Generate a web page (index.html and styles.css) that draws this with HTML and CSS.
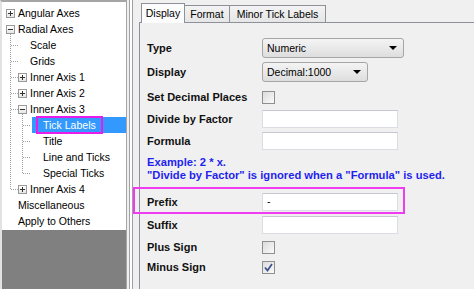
FILE: index.html
```html
<!DOCTYPE html>
<html lang="en">
<head>
    <meta charset="UTF-8">
    <title>Tick Labels - Display</title>
    <link rel="stylesheet" href="styles.css">
</head>
<body>
    <div class="window">
        <!-- Left: tree of axis settings -->
        <div class="tree-pane">
            <svg class="tree-lines" width="127" height="240" viewBox="0 0 127 240">
                <g stroke="#a0a0a0" stroke-width="1" stroke-dasharray="1 1" fill="none">
                    <line x1="10.5" y1="34" x2="10.5" y2="189"/>
                    <line x1="11" y1="45.5" x2="19" y2="45.5"/>
                    <line x1="11" y1="61.5" x2="19" y2="61.5"/>
                    <line x1="11" y1="77.5" x2="18" y2="77.5"/>
                    <line x1="11" y1="93.5" x2="18" y2="93.5"/>
                    <line x1="11" y1="109.5" x2="18" y2="109.5"/>
                    <line x1="11" y1="189.5" x2="18" y2="189.5"/>
                    <line x1="22.5" y1="114" x2="22.5" y2="173"/>
                    <line x1="23" y1="141.5" x2="31" y2="141.5"/>
                    <line x1="23" y1="157.5" x2="31" y2="157.5"/>
                    <line x1="23" y1="173.5" x2="31" y2="173.5"/>
                    <line x1="23" y1="125.5" x2="31" y2="125.5"/>
                </g>
            </svg>
            <ul class="tree">
                <li class="node lv0"><span class="exp plus"></span>Angular Axes</li>
                <li class="node lv0"><span class="exp"></span>Radial Axes</li>
                <li class="node lv1 leaf">Scale</li>
                <li class="node lv1 leaf">Grids</li>
                <li class="node lv1"><span class="exp plus"></span>Inner Axis 1</li>
                <li class="node lv1"><span class="exp plus"></span>Inner Axis 2</li>
                <li class="node lv1"><span class="exp"></span>Inner Axis 3</li>
                <li class="node lv2 selected"><span class="mark">Tick Labels</span></li>
                <li class="node lv2">Title</li>
                <li class="node lv2">Line and Ticks</li>
                <li class="node lv2">Special Ticks</li>
                <li class="node lv1"><span class="exp plus"></span>Inner Axis 4</li>
                <li class="node lv0 leaf">Miscellaneous</li>
                <li class="node lv0 leaf">Apply to Others</li>
            </ul>
            <div class="tree-empty"></div>
        </div>

        <div class="splitter"><div class="grip"></div></div>

        <!-- Right: tabbed settings -->
        <div class="dialog">
            <div class="tabs">
                <div class="tab active">Display</div>
                <div class="tab tab-format">Format</div>
                <div class="tab tab-minor">Minor Tick Labels</div>
            </div>
            <div class="page">
                <div class="form">
                    <div class="label">Type</div>
                    <div class="cell"><div class="combo combo-type"><span>Numeric</span><i class="arrow"></i></div></div>

                    <div class="label">Display</div>
                    <div class="cell"><div class="combo combo-display"><span>Decimal:1000</span><i class="arrow"></i></div></div>

                    <div class="label">Set Decimal Places</div>
                    <div class="cell"><div class="check"></div></div>

                    <div class="label">Divide by Factor</div>
                    <div class="cell"><div class="textbox"></div></div>

                    <div class="label">Formula</div>
                    <div class="cell"><div class="textbox"></div></div>

                    <div class="hint">Example: 2 * x.<br>"Divide by Factor" is ignored when a "Formula" is used.</div>

                    <div class="label prefix-label">Prefix</div>
                    <div class="cell"><div class="textbox">-</div></div>

                    <div class="label">Suffix</div>
                    <div class="cell"><div class="textbox"></div></div>

                    <div class="label">Plus Sign</div>
                    <div class="cell"><div class="check"></div></div>

                    <div class="label">Minus Sign</div>
                    <div class="cell">
                        <div class="check checked">
                            <svg width="11" height="11" viewBox="0 0 11 11"><path d="M2 5.5 L4.5 8.5 L9 2" stroke="#3b4f8c" stroke-width="1.7" fill="none"/></svg>
                        </div>
                    </div>
                </div>
            </div>
        </div>
    </div>
</body>
</html>
```

FILE: styles.css
```css
html, body {
    margin: 0;
    padding: 0;
    background-color: #f0f0f0;
    font-family: 'Liberation Sans', Arial, sans-serif;
    color: #000;
}
.window {
    display: flex;
    width: 474px;
    height: 289px;
    overflow: hidden;
}

/* tree pane */
.tree-pane {
    position: relative;
    width: 127px;
    height: 289px;
    box-sizing: border-box;
    border-top: 2px solid #a5a5a5;
    border-left: 2px solid #e2e2e2;
    border-right: 1px solid #a5a5a5;
    display: flex;
    flex-direction: column;
    background: #fff;
}
.tree-lines {
    position: absolute;
    top: -2px;
    left: -2px;
    pointer-events: none;
}
.tree {
    list-style: none;
    margin: 0;
    padding: 3px 0 0 0;
}
.node {
    display: flex;
    align-items: center;
    height: 16px;
    font-size: 10.5px;
    white-space: nowrap;
}
.node.lv0 { padding-left: 4px; }
.node.lv0.leaf { padding-left: 16px; }
.node.lv1 { padding-left: 16px; }
.node.lv1.leaf { padding-left: 28px; }
.node.lv2 { padding-left: 41px; }
.node.selected {
    margin-left: 30px;
    padding-left: 11px;
    background-color: #3399ff;
    color: #fff;
}
.mark {
    position: relative;
}
.mark::after {
    content: "";
    position: absolute;
    left: -7px;
    right: -7px;
    top: -3px;
    bottom: -3px;
    border: 2px solid #e81de8;
}
.exp {
    position: relative;
    width: 9px;
    height: 9px;
    box-sizing: border-box;
    margin-right: 3px;
    border: 1px solid #9a9a9a;
    background: linear-gradient(#ffffff, #e6e6e6);
}
.exp::before {
    content: "";
    position: absolute;
    left: 1px;
    top: 3px;
    width: 5px;
    height: 1px;
    background: #333;
}
.exp.plus::after {
    content: "";
    position: absolute;
    left: 3px;
    top: 1px;
    width: 1px;
    height: 5px;
    background: #333;
}
.tree-empty {
    flex: 1;
    background-color: #808080;
    margin-top: 1px;
}

/* splitter */
.splitter {
    width: 12px;
    padding-left: 2px;
    box-sizing: border-box;
}
.grip {
    width: 2px;
    height: 100%;
    background: #fff;
    border-left: 1px solid #a0a0a0;
    border-right: 1px solid #a0a0a0;
}

/* tabs */
.dialog {
    flex: 1;
    display: flex;
    flex-direction: column;
}
.tabs {
    display: flex;
    align-items: flex-end;
    height: 22px;
    padding-left: 2px;
}
.tab {
    position: relative;
    height: 17px;
    box-sizing: border-box;
    width: 44px;
    border: 1px solid #8e9199;
    border-bottom: none;
    margin-right: -1px;
    background: linear-gradient(#f3f3f3, #e6e6e6);
    font-size: 10.5px;
    line-height: 16px;
    text-align: center;
}
.tab.active {
    height: 20px;
    line-height: 18px;
    margin-bottom: -1px;
    background: #fcfcfc;
    z-index: 1;
}
.tab-format { width: 46px; }
.tab-minor { width: 97px; }
.page {
    flex: 1;
    border-left: 1px solid #8e9199;
    border-top: 1px solid #8e9199;
    background-color: #f0f0f0;
    padding: 13px 0 0 7px;
}

/* form grid */
.form {
    display: grid;
    grid-template-columns: 115px 1fr;
    grid-template-rows: 24px 24px 26px 18px 26px 36px 24px 22px 22px 18px;
}
.label {
    display: flex;
    align-items: center;
    font-size: 11px;
    font-weight: bold;
    color: #111;
    white-space: nowrap;
}
.cell {
    display: flex;
    align-items: center;
}
.prefix-label {
    position: relative;
}
.prefix-label::before {
    content: "";
    position: absolute;
    left: -14px;
    top: -3px;
    width: 272px;
    height: 27px;
    box-sizing: border-box;
    border: 2px solid #f03cf0;
}
.combo {
    display: flex;
    justify-content: space-between;
    align-items: center;
    height: 20px;
    box-sizing: border-box;
    padding: 0 6px 0 4px;
    border: 1px solid #a6a6a6;
    border-radius: 3px;
    background: linear-gradient(#f4f4f4, #dedede);
    font-size: 10.5px;
}
.combo-type { width: 142px; }
.combo-display { width: 106px; }
.arrow {
    width: 0;
    height: 0;
    border-left: 4px solid transparent;
    border-right: 4px solid transparent;
    border-top: 4px solid #000;
}
.textbox {
    width: 136px;
    height: 18px;
    box-sizing: border-box;
    border: 1px solid #dadde2;
    border-top-color: #c5c8ce;
    background: #fff;
    font-size: 10.5px;
    line-height: 15px;
    padding-left: 4px;
}
.check {
    width: 13px;
    height: 13px;
    box-sizing: border-box;
    border: 1px solid #8f8f8f;
    background: linear-gradient(135deg, #dcdcdc, #fafafa);
}
.check svg {
    display: block;
}
.hint {
    grid-column: 1 / 3;
    padding-top: 2px;
    font-size: 11.2px;
    line-height: 13px;
    font-weight: bold;
    color: #1f1ff0;
    white-space: nowrap;
}
```
